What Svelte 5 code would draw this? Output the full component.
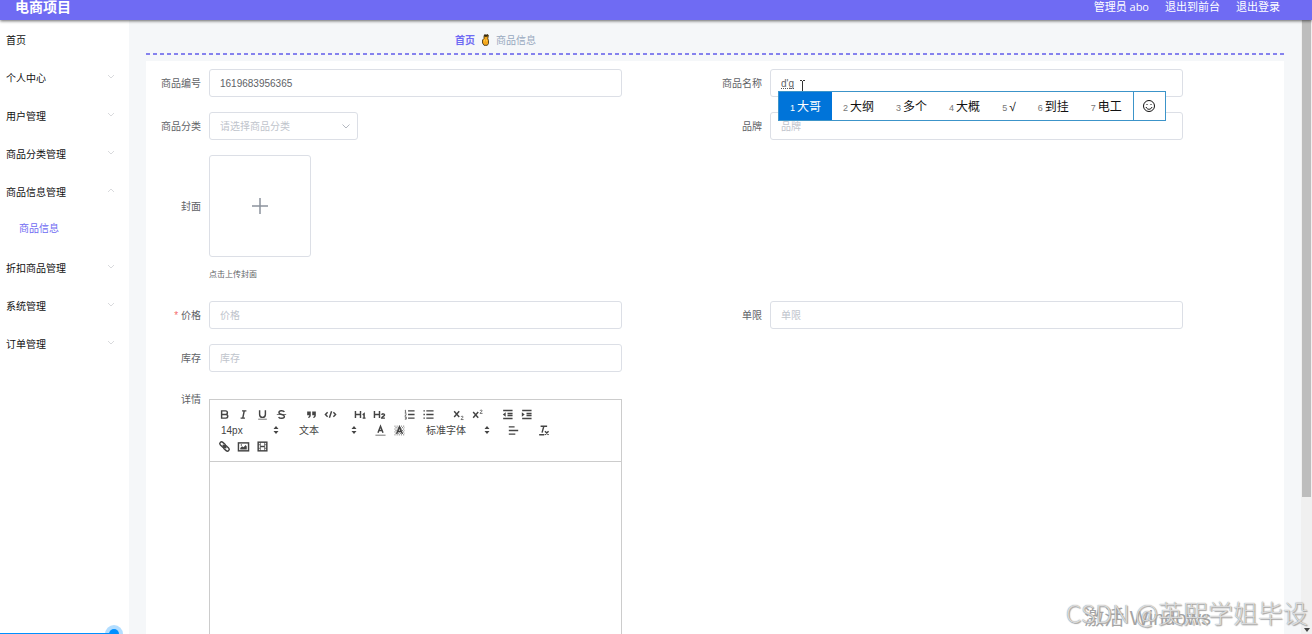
<script lang="ts">
  const menuItems = [
    { label: '首页', arrow: '' },
    { label: '个人中心', arrow: 'down' },
    { label: '用户管理', arrow: 'down' },
    { label: '商品分类管理', arrow: 'down' },
    { label: '商品信息管理', arrow: 'up', children: ['商品信息'] },
    { label: '折扣商品管理', arrow: 'down' },
    { label: '系统管理', arrow: 'down' },
    { label: '订单管理', arrow: 'down' },
  ];

  const candidates = ['大哥', '大纲', '多个', '大概', '√', '到挂', '电工'];

  const formatGroups = [
    ['bold', 'italic', 'underline', 'strike'],
    ['quote', 'code'],
    ['h1', 'h2'],
    ['ordered', 'bullet'],
    ['sub', 'super'],
    ['outdent', 'indent'],
  ];

  let goodsNo = $state('1619683956365');
  let goodsName = $state("d'g");
  let category = $state('');
</script>

{#snippet icon(name: string)}
  <svg class="ql-icon" viewBox="0 0 18 18" aria-hidden="true">
    {#if name === 'bold'}
      <path d="M5 4h5.5a2.5 2.5 0 0 1 0 5H5zM5 9h6a2.5 2.5 0 0 1 0 5H5z" />
    {:else if name === 'italic'}
      <path d="M7 4h6M5 14h6M10 4 8 14" />
    {:else if name === 'underline'}
      <path d="M5 3v6a4 4 0 0 0 8 0V3" />
      <path class="thin" d="M3 15.500h12" />
    {:else if name === 'strike'}
      <path d="M13 5.500C11.500 3 5.500 3.200 5.500 6.200c0 3.800 7.500 2 7.500 5.500 0 3.200-6.500 3.300-8 .8" />
      <path class="thin" d="M2.500 9h13" />
    {:else if name === 'quote'}
      <path class="solid" d="M3 5h5v5c0 2-1 3.500-3.500 4v-1.500C5.500 12 6 11 6 10H3zM10 5h5v5c0 2-1 3.500-3.500 4v-1.500c1-.5 1.500-1.500 1.500-2.500h-3z" />
    {:else if name === 'code'}
      <path d="M5 6 2 9l3 3M13 6l3 3-3 3M10.500 4.500l-3 9" />
    {:else if name === 'h1'}
      <path d="M2 4v10M9 4v10M2 9h7M12 9.500l2-1.500v6M12 14h4" />
    {:else if name === 'h2'}
      <path d="M2 4v10M9 4v10M2 9h7M12 9.500c.5-2 4-1.800 4 .2 0 1.500-4 2.500-4 4.300h4.500" />
    {:else if name === 'ordered'}
      <path d="M7 4h9M7 9h9M7 14h9" />
      <path class="thin" d="M2.500 3.500 3.500 3v3M2.500 6h2M2.500 8h2v1l-2 2h2M2.500 12.500h2v3h-2M3 14h1.500" />
    {:else if name === 'bullet'}
      <path d="M6 4h10M6 9h10M6 14h10M2 4h2M2 9h2M2 14h2" />
    {:else if name === 'sub'}
      <path d="M3 4.500l7 8M10 4.500l-7 8" />
      <path class="thin" d="M12.500 12.500c.3-1.600 3-1.500 3 0 0 1-3 2-3 3.500h3.500" />
    {:else if name === 'super'}
      <path d="M3 5.500l7 8M10 5.500l-7 8" />
      <path class="thin" d="M12.500 4c.3-1.600 3-1.500 3 0 0 1-3 2-3 3.500h3.500" />
    {:else if name === 'outdent'}
      <path d="M3 3.500h13M9 7.500h7M9 10.500h7M3 14.500h13" />
      <path class="solid" d="M6.500 6v6L2.500 9z" />
    {:else if name === 'indent'}
      <path d="M3 3.500h13M9 7.500h7M9 10.500h7M3 14.500h13" />
      <path class="solid" d="M2.500 6v6l4-3z" />
    {:else if name === 'color'}
      <path class="thin" d="M2 15.500h14" />
      <path d="M5.500 12 9 3l3.500 9M7 9h4" />
    {:else if name === 'background'}
      <path class="dots" d="M2 3h14M2 7h14M2 11h14M2 15h14" />
      <path class="dots" stroke-dashoffset="1.500" d="M2 5h14M2 9h14M2 13h14" />
      <path d="M5 13.500 9 4l4 9.500M6.500 10.500h5" />
    {:else if name === 'align'}
      <path d="M2.500 4h8M2.500 9h13M2.500 14h9" />
    {:else if name === 'clean'}
      <path d="M5 3h9M9.500 3 7 12M3 15h7M11 10l5 5M16 10l-5 5" />
    {:else if name === 'link'}
      <rect x="2" y="4" width="9" height="5" rx="2.500" transform="rotate(42 6.500 6.500)" />
      <rect x="7" y="9" width="9" height="5" rx="2.500" transform="rotate(42 11.500 11.500)" />
      <path d="M6.500 6.500l5 5" />
    {:else if name === 'image'}
      <rect x="2" y="4" width="14" height="11" />
      <path class="solid" d="M4.500 13v-2l2.500-2.500 2 1.500 3-3 1.500 2v4z" />
      <circle class="solid" cx="6" cy="7" r="1" />
    {:else if name === 'video'}
      <rect x="3" y="3" width="12" height="12" />
      <path class="thin" d="M6 3v12M12 3v12M3 6.500h3M3 11.500h3M12 6.500h3M12 11.500h3" />
      <path d="M6 9h6" />
    {/if}
  </svg>
{/snippet}

{#snippet tool(name: string)}
  <button class="tool" type="button" aria-label={name}>{@render icon(name)}</button>
{/snippet}

{#snippet picker(label: string, value: string, wide: boolean)}
  <span class="picker" class:wide>
    <select aria-label={label}><option>{value}</option></select>
    <svg class="updown" viewBox="0 0 6 8" aria-hidden="true"><path d="M3 0l2.500 3h-5zM3 8 .5 5h5z" /></svg>
  </span>
{/snippet}

<div class="page">
  <header class="topbar">
    <h1>电商项目</h1>
    <nav class="account">
      <span>管理员 abo</span>
      <a href="#front">退出到前台</a>
      <a href="#logout">退出登录</a>
    </nav>
  </header>

  <div class="body">
    <aside class="sidebar">
      {#each menuItems as item}
        <button class="menu-item" type="button">
          <span>{item.label}</span>
          {#if item.arrow}
            <svg class="arrow" class:up={item.arrow === 'up'} viewBox="0 0 8 5" aria-hidden="true"><path d="M1 1l3 3 3-3" /></svg>
          {/if}
        </button>
        {#each item.children ?? [] as child}
          <a class="submenu-item" href="#goods">{child}</a>
        {/each}
      {/each}
    </aside>

    <main class="content">
      <nav class="breadcrumb">
        <a href="#home">首页</a>
        <svg class="separator" viewBox="0 0 9 12" aria-hidden="true">
          <path class="hand" d="M3 4.500 3 1.500 4.200 .8l.6 1.800L6.200.6l1.200.6L6.800 4.500 7.500 6.500v3l-1.200 1.800H3L1.500 9V6z" />
          <path class="knuckle" d="M3.200.6h3.600v2H3.200z" />
          <path class="crease" d="M3.500 5.500v2M5.500 5.500v2" />
        </svg>
        <span>商品信息</span>
      </nav>

      <form class="card">
        <div class="field">
          <label for="goods-no">商品编号</label>
          <div class="control"><input id="goods-no" type="text" bind:value={goodsNo} /></div>
        </div>
        <div class="field">
          <label for="goods-name">商品名称</label>
          <div class="control">
            <input id="goods-name" class="composing" type="text" bind:value={goodsName} />
            <svg class="caret" viewBox="0 0 5 12" aria-hidden="true"><path d="M0 .5h2M3 .5h2M2.500 1v10M0 11.500h2M3 11.500h2" /></svg>
            <div class="ime">
              {#each candidates as word, i}
                <span class="candidate" class:active={i === 0}><small>{i + 1}</small>{word}</span>
              {/each}
              <button class="emoji" type="button" aria-label="emoji">
                <svg viewBox="0 0 12 12"><circle cx="6" cy="6" r="5.500" /><path d="M3 7c1 3 5 3 6 0M4 4v1M8 4v1" /></svg>
              </button>
            </div>
          </div>
        </div>

        <div class="field">
          <label for="category">商品分类</label>
          <div class="control">
            <span class="dropdown">
              <select id="category" bind:value={category}>
                <option value="" disabled>请选择商品分类</option>
              </select>
              <svg viewBox="0 0 8 5" aria-hidden="true"><path d="M.5.5 4 4 7.500.5" /></svg>
            </span>
          </div>
        </div>
        <div class="field">
          <label for="brand">品牌</label>
          <div class="control"><input id="brand" type="text" placeholder="品牌" /></div>
        </div>

        <div class="field full cover">
          <label for="cover">封面</label>
          <div class="control">
            <button id="cover" class="upload" type="button" aria-label="上传">
              <svg viewBox="0 0 16 16"><path d="M8 0v16M0 8h16" /></svg>
            </button>
            <p class="tip">点击上传封面</p>
          </div>
        </div>

        <div class="field">
          <label for="price" class="required">价格</label>
          <div class="control"><input id="price" type="text" placeholder="价格" /></div>
        </div>
        <div class="field">
          <label for="limit">单限</label>
          <div class="control"><input id="limit" type="text" placeholder="单限" /></div>
        </div>

        <div class="field first-column">
          <label for="stock">库存</label>
          <div class="control"><input id="stock" type="text" placeholder="库存" /></div>
        </div>

        <div class="field first-column detail">
          <label for="detail">详情</label>
          <div class="control">
            <div class="editor">
              <div class="toolbar">
                <div class="tool-row">
                  {#each formatGroups as group}
                    <span class="formats">
                      {#each group as name}{@render tool(name)}{/each}
                    </span>
                  {/each}
                </div>
                <div class="tool-row">
                  {@render picker('字号', '14px', false)}
                  {@render picker('标题', '文本', false)}
                  <span class="formats">{@render tool('color')}{@render tool('background')}</span>
                  {@render picker('字体', '标准字体', true)}
                  {@render tool('align')}
                  {@render tool('clean')}
                </div>
                <div class="tool-row">
                  <span class="formats">{@render tool('link')}{@render tool('image')}{@render tool('video')}</span>
                </div>
              </div>
              <textarea id="detail"></textarea>
            </div>
          </div>
        </div>
      </form>
    </main>

    <div class="scrollbar">
      <div class="thumb"></div>
      <svg viewBox="0 0 6 4" aria-hidden="true"><path d="M0 0h6L3 4z" /></svg>
    </div>
  </div>

  <div class="progress"><span class="knob"></span></div>
  <div class="activate">激活 Windows</div>
  <div class="watermark">CSDN @英熙学姐毕设</div>
</div>

<style>
  :global(body) {
    margin: 0;
  }

  .page {
    position: relative;
    display: flex;
    flex-direction: column;
    height: 100vh;
    overflow: hidden;
    background: #f5f7f9;
    font-family: 'Liberation Sans', 'Noto Sans CJK SC', sans-serif;
    font-size: 10px;
    color: #606266;
  }

  button,
  input,
  select,
  textarea {
    box-sizing: border-box;
    margin: 0;
    padding: 0;
    border: none;
    background: none;
    font: inherit;
    color: inherit;
    outline: none;
  }

  a {
    color: inherit;
    text-decoration: none;
  }

  svg {
    fill: none;
    stroke: currentColor;
  }

  .topbar {
    position: relative;
    z-index: 1;
    display: flex;
    justify-content: space-between;
    flex: none;
    height: 20px;
    padding: 0 32px 0 15px;
    background: #6f6bf3;
    box-shadow: 0 1px 3px rgba(0, 0, 0, 0.6);
    color: #fff;
    line-height: 14px;
  }

  .topbar h1 {
    margin: 0;
    font-size: 14px;
    font-weight: bold;
  }

  .account {
    display: flex;
    gap: 16px;
    font-family: 'Open Sans', 'Noto Sans CJK SC', sans-serif;
    font-size: 11px;
  }

  .body {
    display: flex;
    flex: 1;
    min-height: 0;
  }

  .sidebar {
    flex: none;
    width: 129px;
    background: #fff;
    color: #111;
  }

  .menu-item {
    display: flex;
    align-items: center;
    justify-content: space-between;
    width: 100%;
    height: 38px;
    padding: 0 14px 0 6px;
  }

  .arrow {
    width: 8px;
    height: 5px;
    margin-bottom: 2px;
    color: #c8cacf;
    stroke-width: 0.7;
  }

  .arrow.up {
    transform: rotate(180deg);
  }

  .submenu-item {
    display: block;
    padding-left: 19px;
    line-height: 38px;
    color: #6f6bf3;
  }

  .content {
    flex: 1;
    min-width: 0;
    padding: 0 17px;
  }

  .breadcrumb {
    display: flex;
    align-items: center;
    gap: 6px;
    height: 35px;
    box-sizing: border-box;
    padding: 4px 0 0 309px;
    margin-bottom: 6px;
    background: repeating-linear-gradient(90deg, #8582ee 0 4px, transparent 4px 7px) left bottom / 100% 2px no-repeat;
    color: #97a8be;
  }

  .breadcrumb a {
    font-weight: bold;
    color: #6f6bf3;
  }

  .separator {
    width: 9px;
    height: 12px;
  }

  .hand {
    fill: #f5a81c;
    stroke: #33280f;
    stroke-width: 0.8;
  }

  .knuckle {
    fill: #33280f;
    stroke: none;
  }

  .crease {
    stroke: #fbc74a;
  }

  .card {
    display: grid;
    grid-template-columns: 1fr 1fr;
    row-gap: 15px;
    padding: 8px 8px 24px;
    background: #fff;
  }

  .field {
    display: flex;
    gap: 8px;
    padding-right: 93px;
  }

  .field label {
    flex: none;
    width: 47px;
    height: 28px;
    line-height: 30px;
    text-align: right;
    white-space: nowrap;
  }

  .required::before {
    content: '* ';
    color: #f56c6c;
  }

  .control {
    position: relative;
    flex: 1;
    min-width: 0;
  }

  .full {
    grid-column: 1 / -1;
  }

  .first-column {
    grid-column: 1;
  }

  input,
  .dropdown select {
    display: block;
    width: 100%;
    height: 28px;
    padding: 0 10px;
    border: 1px solid #dcdfe6;
    border-radius: 3px;
    background: #fff;
  }

  input::placeholder {
    color: #c0c4cc;
    opacity: 1;
  }

  /* dotted line under the uncommitted pinyin */
  .composing {
    background: repeating-linear-gradient(90deg, #555 0 1px, transparent 1px 2px) 10px 18px / 13px 1px no-repeat #fff;
  }

  .caret {
    position: absolute;
    top: 11px;
    left: 30px;
    width: 5px;
    height: 12px;
    color: #333;
  }

  .ime {
    position: absolute;
    top: 22px;
    left: 8px;
    z-index: 2;
    display: flex;
    height: 30px;
    box-sizing: border-box;
    border: 1px solid #3c94c9;
    background: #fff;
    color: #111;
    font-size: 12px;
    line-height: 26px;
    white-space: nowrap;
  }

  .candidate {
    padding: 2px 11px 0;
  }

  .candidate small {
    margin-right: 2px;
    font-size: 9px;
    color: #777;
  }

  .candidate.active {
    background: #0074d9;
    color: #fff;
  }

  .candidate.active small {
    color: #fff;
  }

  .emoji {
    display: grid;
    place-items: center;
    width: 32px;
    border-left: 1px solid #3c94c9;
  }

  .emoji svg {
    width: 12px;
    height: 12px;
  }

  .dropdown {
    position: relative;
    display: block;
    width: 149px;
  }

  .dropdown select {
    appearance: none;
    color: #c0c4cc;
  }

  .dropdown svg {
    position: absolute;
    top: 12px;
    right: 8px;
    width: 8px;
    height: 5px;
    color: #b4b8c0;
  }

  .cover label {
    line-height: 104px;
  }

  .upload {
    display: grid;
    place-items: center;
    width: 102px;
    height: 102px;
    border: 1px solid #dcdfe6;
    border-radius: 3px;
  }

  .upload svg {
    width: 16px;
    height: 16px;
    color: #8c939d;
    stroke-width: 1.5;
  }

  .tip {
    margin: 10px 0 3px;
    font-size: 8px;
    line-height: 16px;
  }

  .detail label {
    line-height: 26px;
  }

  .editor {
    margin-top: 12px;
    border: 1px solid #ccc;
  }

  .toolbar {
    padding: 6px 5px 7px;
    border-bottom: 1px solid #ccc;
    color: #444;
  }

  .tool-row {
    display: flex;
    gap: 11px;
    height: 16px;
  }

  .formats {
    display: flex;
  }

  .tool {
    display: grid;
    place-items: center;
    width: 19px;
    height: 16px;
  }

  .ql-icon {
    width: 13px;
    height: 13px;
    stroke-width: 2;
  }

  .ql-icon .thin {
    stroke-width: 1;
  }

  .ql-icon .dots {
    stroke-width: 1;
    stroke-dasharray: 1.5 1.5;
  }

  .ql-icon .solid {
    fill: currentColor;
    stroke: none;
  }

  .picker {
    position: relative;
    width: 67px;
  }

  .picker.wide {
    width: 73px;
  }

  .picker select {
    display: block;
    width: 100%;
    height: 16px;
    padding-left: 6px;
    appearance: none;
  }

  .updown {
    position: absolute;
    top: 4px;
    right: 3px;
    width: 6px;
    height: 8px;
    fill: currentColor;
    stroke: none;
  }

  textarea {
    display: block;
    width: 100%;
    height: 280px;
    padding: 8px 10px;
    resize: none;
  }

  .scrollbar {
    display: flex;
    flex-direction: column;
    align-items: center;
    justify-content: space-between;
    flex: none;
    width: 11px;
    padding-bottom: 2px;
    background: #f0f0f0;
  }

  .thumb {
    width: 9px;
    height: 78%;
    background: #bdbdbd;
  }

  .scrollbar svg {
    width: 6px;
    height: 4px;
    fill: #444;
    stroke: none;
  }

  .progress {
    position: absolute;
    bottom: 0;
    left: 0;
    width: 114px;
    height: 1px;
    background: #0090ff;
  }

  .knob {
    position: absolute;
    top: -4px;
    right: -5px;
    width: 10px;
    height: 10px;
    border-radius: 50%;
    background: #0090ff;
    box-shadow: 0 0 0 4px rgba(0, 144, 255, 0.3);
  }

  .activate {
    position: absolute;
    right: 101px;
    bottom: 4px;
    font-family: 'Liberation Sans', 'Noto Sans CJK SC', sans-serif;
    font-size: 20px;
    line-height: 24px;
    color: #a4a4a4;
  }

  .watermark {
    position: absolute;
    right: 4px;
    bottom: 6px;
    font-family: 'Noto Sans CJK SC', sans-serif;
    font-size: 25px;
    font-weight: 300;
    line-height: 32px;
    color: rgba(255, 255, 255, 0.7);
    text-shadow: 0 0 1px #777, 1px 1px 1px #aaa;
  }
</style>
